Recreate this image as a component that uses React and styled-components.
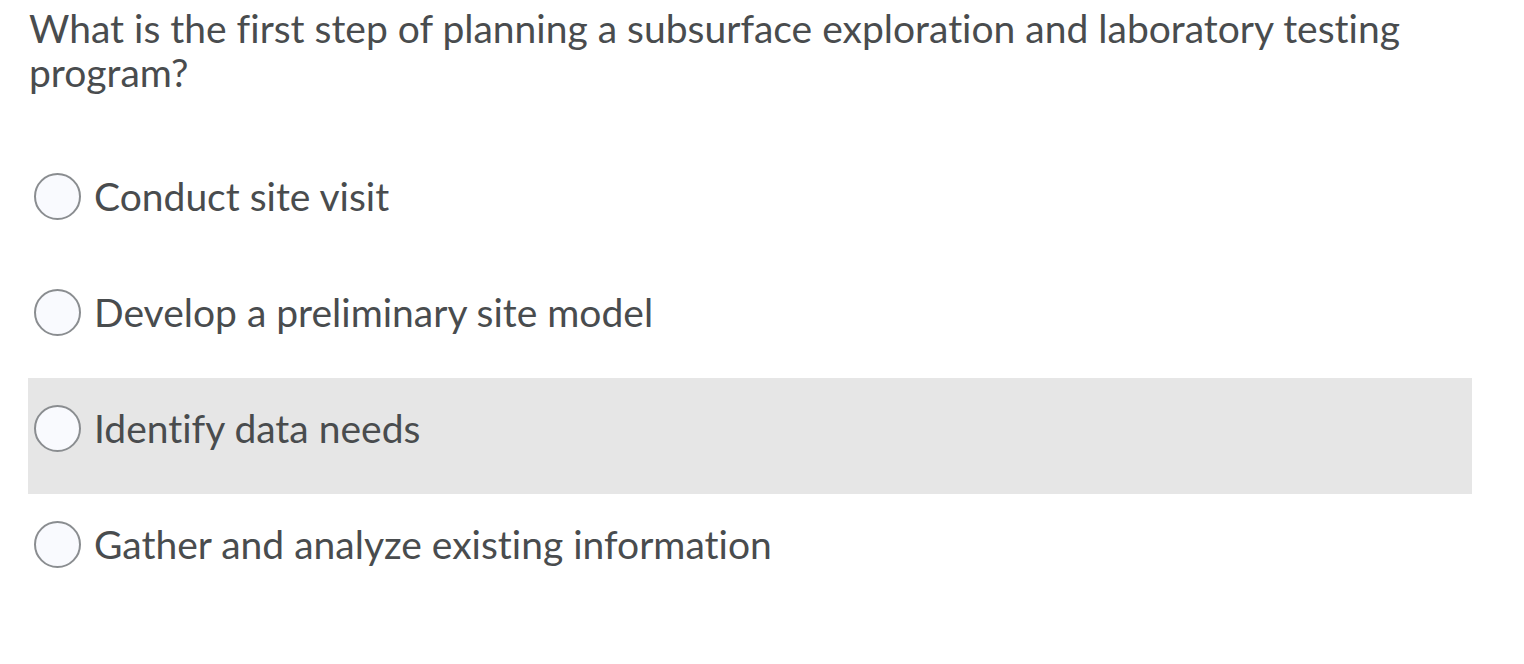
import React from "react";
import styled, { createGlobalStyle } from "styled-components";

const GlobalStyle = createGlobalStyle`
  body {
    margin: 0;
    background: #ffffff;
    font-family: Lato, "Open Sans", sans-serif;
    font-variant-ligatures: none;
  }
`;

const Page = styled.div`
  padding: 6px 52px 0 28px;
  color: #494c4e;
`;

const Question = styled.div`
  font-size: 39px;
  line-height: 44px;
  padding-left: 1px;
  margin-bottom: 52px;
`;

const Options = styled.div`
  display: flex;
  flex-direction: column;
`;

const Row = styled.label`
  display: flex;
  align-items: center;
  gap: 13px;
  height: 116px;
  padding: 0 0 16px 6px;
  box-sizing: border-box;
  background: ${(p) => (p.$hover ? "#e6e6e6" : "transparent")};
  font-size: 39px;
`;

const Radio = styled.span`
  flex: none;
  width: 43px;
  height: 43px;
  border-radius: 50%;
  border: 2px solid #8a8d90;
  background: #f9fafe;
`;

const options = [
  "Conduct site visit",
  "Develop a preliminary site model",
  "Identify data needs",
  "Gather and analyze existing information",
];

const App = () => (
  <>
    <GlobalStyle />
    <Page>
      <Question>
        What is the first step of planning a subsurface exploration and laboratory testing
        program?
      </Question>
      <Options>
        {options.map((o, i) => (
          <Row key={o} $hover={i === 2}>
            <Radio />
            <span>{o}</span>
          </Row>
        ))}
      </Options>
    </Page>
  </>
);

export default App;
